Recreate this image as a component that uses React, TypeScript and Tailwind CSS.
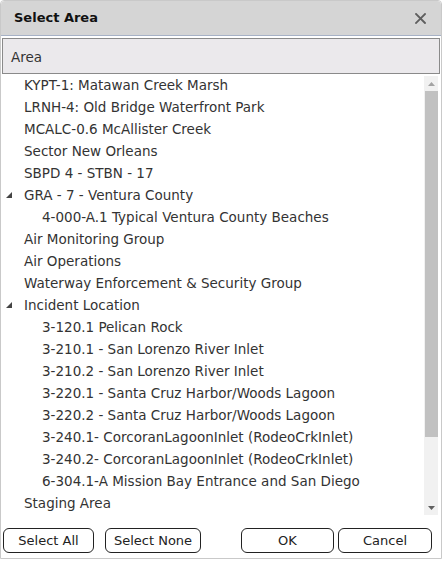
import React from "react";

type Item = { label: string; level: 0 | 1; expanded?: boolean };

const items: Item[] = [
  { label: "KYPT-1: Matawan Creek Marsh", level: 0 },
  { label: "LRNH-4: Old Bridge Waterfront Park", level: 0 },
  { label: "MCALC-0.6 McAllister Creek", level: 0 },
  { label: "Sector New Orleans", level: 0 },
  { label: "SBPD 4 - STBN - 17", level: 0 },
  { label: "GRA - 7 - Ventura County", level: 0, expanded: true },
  { label: "4-000-A.1 Typical Ventura County Beaches", level: 1 },
  { label: "Air Monitoring Group", level: 0 },
  { label: "Air Operations", level: 0 },
  { label: "Waterway Enforcement & Security Group", level: 0 },
  { label: "Incident Location", level: 0, expanded: true },
  { label: "3-120.1 Pelican Rock", level: 1 },
  { label: "3-210.1 - San Lorenzo River Inlet", level: 1 },
  { label: "3-210.2 - San Lorenzo River Inlet", level: 1 },
  { label: "3-220.1 - Santa Cruz Harbor/Woods Lagoon", level: 1 },
  { label: "3-220.2 - Santa Cruz Harbor/Woods Lagoon", level: 1 },
  { label: "3-240.1- CorcoranLagoonInlet (RodeoCrkInlet)", level: 1 },
  { label: "3-240.2- CorcoranLagoonInlet (RodeoCrkInlet)", level: 1 },
  { label: "6-304.1-A Mission Bay Entrance and San Diego", level: 1 },
  { label: "Staging Area", level: 0 },
];

function Caret() {
  // small filled triangle pointing down-right (expanded node)
  return (
    <svg width="7" height="7" viewBox="0 0 7 7" className="absolute left-[5px] top-[8px]">
      <polygon points="6,0 6,6 0,6" fill="#444" />
    </svg>
  );
}

function Button({ children, className }: { children: React.ReactNode; className: string }) {
  return (
    <button
      className={
        "h-[25px] rounded-[6px] border border-[#222] bg-white text-[13px] text-[#222] flex items-center justify-center " +
        className
      }
    >
      {children}
    </button>
  );
}

export default function App() {
  return (
    <div
      className="w-[443px] h-[561px] bg-white overflow-hidden"
      style={{ fontFamily: '"DejaVu Sans", Verdana, sans-serif' }}
    >
      <div className="w-[442px] h-[559px] border border-[#c9c9c9] rounded-t-[4px] flex flex-col bg-white">
        {/* title bar */}
        <div className="h-[35px] shrink-0 bg-[#d5d5d5] border-b border-[#a7b2c6] rounded-t-[4px] flex items-center justify-between pl-[13px] pr-[15px]">
          <span className="text-[13px] font-bold text-[#111]">Select Area</span>
          <svg width="11" height="11" viewBox="0 0 11 11">
            <path d="M1 1 L10 10 M10 1 L1 10" stroke="#5e5e5e" strokeWidth="1.8" strokeLinecap="square" />
          </svg>
        </div>

        {/* column header */}
        <div className="mt-[2px] mx-[1px] h-[36px] shrink-0 bg-[#ebe9ec] border border-[#8a8a8a] flex items-center pl-[8px] pt-[2px] text-[13.5px] text-[#333]">
          Area
        </div>

        {/* list + scrollbar */}
        <div className="h-[442px] shrink-0 flex">
          <div className="flex-1 overflow-hidden">
            {items.map((it) => (
              <div
                key={it.label}
                className={
                  "relative h-[22px] flex items-center text-[13.5px] text-[#333] whitespace-nowrap " +
                  (it.level === 0 ? "pl-[23px]" : "pl-[41px]")
                }
              >
                {it.expanded && <Caret />}
                {it.label}
              </div>
            ))}
          </div>
          <div className="w-[14px] mr-[3px] mt-[2px] h-[439px] bg-[#f1f1f1] flex flex-col items-center">
            <div className="h-[15px] flex items-center justify-center">
              <svg width="7" height="4" viewBox="0 0 7 4">
                <polygon points="0,4 3.5,0 7,4" fill="#a3a3a3" />
              </svg>
            </div>
            <div className="w-[13px] h-[346px] bg-[#c1c1c1]" />
            <div className="flex-1" />
            <div className="h-[15px] flex items-center justify-center">
              <svg width="7" height="4" viewBox="0 0 7 4">
                <polygon points="0,0 7,0 3.5,4" fill="#606060" />
              </svg>
            </div>
          </div>
        </div>

        {/* buttons */}
        <div className="flex items-center mt-[12px] px-[2px]">
          <Button className="w-[91px]">Select All</Button>
          <Button className="w-[96px] ml-[11px]">Select None</Button>
          <Button className="w-[93px] ml-[40px]">OK</Button>
          <Button className="w-[94px] ml-[4px]">Cancel</Button>
        </div>
      </div>
    </div>
  );
}
